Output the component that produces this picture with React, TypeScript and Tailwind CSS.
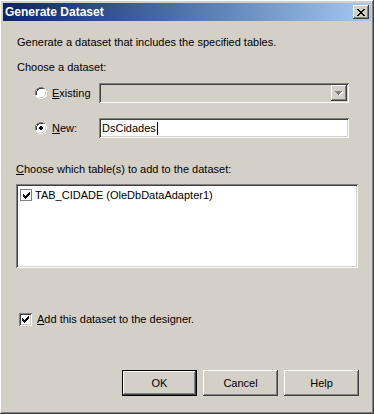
import React from "react";

const sunken =
  "shadow-[inset_1px_1px_0_#808080,inset_-1px_-1px_0_#ffffff,inset_2px_2px_0_#404040,inset_-2px_-2px_0_#d4d0c8]";
const raised =
  "shadow-[inset_-1px_-1px_0_#404040,inset_1px_1px_0_#ffffff,inset_-2px_-2px_0_#808080,inset_2px_2px_0_#d4d0c8]";

function Pixels({ rows, color, w, h }: { rows: string[]; color: string; w: number; h: number }) {
  const rects: React.ReactElement[] = [];
  rows.forEach((r, y) => {
    for (let x = 0; x < r.length; x++) {
      if (r[x] === "x") rects.push(<rect key={`${x}-${y}`} x={x} y={y} width={1} height={1} fill={color} />);
    }
  });
  return (
    <svg width={w} height={h} viewBox={`0 0 ${w} ${h}`} shapeRendering="crispEdges">
      {rects}
    </svg>
  );
}

const CHECK = ["......x", ".....xx", "x...xxx", "xx.xxx.", "xxxxx..", ".xxx...", "..x...."];
const CLOSE = ["xx....xx", ".xx..xx.", "..xxxx..", "...xx...", "..xxxx..", ".xx..xx.", "xx....xx"];

function Radio({ checked }: { checked?: boolean }) {
  return (
    <svg width="12" height="12" viewBox="0 0 12 12" className="shrink-0" shapeRendering="crispEdges">
      <path d="M4 0h4v1h2v1h1v2h1v4h-1v2h-1v1h-2v1h-4v-1h-2v-1h-1v-2h-1v-4h1v-2h1v-1h2z" fill="#ffffff" />
      <path d="M4 0h4v1h2v1h-2v-1h-4v1h-2v1h-1v2h-1v-2h1v-1h1v-1h2zM0 4h1v4h-1z" fill="#808080" />
      <path d="M4 1h4v1h-4v1h-1v1h-1v4h-1v-4h1v-1h1v-1h1z M2 2h1v1h-1z" fill="#404040" />
      <path d="M11 4h1v4h-1v2h-1v1h-2v1h-4v-1h4v-1h2v-1h1z" fill="#ffffff" />
      <path d="M10 4h1v4h-1v1h-1v1h-1v1h-4v-1h4v-1h1v-1h1z" fill="#d4d0c8" />
      <path d="M4 2h4v1h1v1h1v4h-1v1h-1v1h-4v-1h-1v-1h-1v-4h1v-1h1z" fill="#ffffff" />
      {checked && <path d="M5 4h2v1h1v2h-1v1h-2v-1h-1v-2h1z" fill="#000000" />}
    </svg>
  );
}

export default function App() {
  return (
    <div
      className={`w-[374px] h-[414px] bg-[#d4d0c8] p-[3px] flex flex-col text-[11px] leading-[13px] text-black ${raised}`}
      style={{ fontFamily: '"Liberation Sans", Arial, sans-serif' }}
    >
      {/* Title bar */}
      <div className="h-[18px] flex items-center justify-between bg-gradient-to-r from-[#0a246a] to-[#a6caf0] pl-[2px] pr-[2px]">
        <span className="text-white font-bold text-[12px] leading-[14px]">Generate Dataset</span>
        <div className={`w-[16px] h-[14px] bg-[#d4d0c8] flex items-center justify-center ${raised}`}>
          <Pixels rows={CLOSE} color="#000000" w={8} h={7} />
        </div>
      </div>

      <div className="flex flex-col">
        <div className="mt-[15px] ml-[14px] h-[13px]">Generate a dataset that includes the specified tables.</div>
        <div className="mt-[12px] ml-[14px] h-[13px]">Choose a dataset:</div>

        {/* Existing row */}
        <div className="mt-[9px] h-[20px] flex items-center">
          <div className="ml-[32px] w-[12px] flex"><Radio /></div>
          <span className="ml-[5px] w-[47px]">
            <u>E</u>xisting
          </span>
          <div className={`w-[250px] h-[20px] bg-[#d4d0c8] flex justify-end items-start p-[2px] ${sunken}`}>
            <div className={`w-[16px] h-[16px] flex items-center justify-center ${raised}`}>
              <svg width="8" height="5" viewBox="0 0 8 5" shapeRendering="crispEdges">
                <path d="M1 1h7v1h-1v1h-1v1h-1v1h-1v-1h-1v-1h-1v-1h-1z" fill="#ffffff" />
                <path d="M0 0h7v1h-1v1h-1v1h-1v1h-1v-1h-1v-1h-1v-1h-1z" fill="#808080" />
              </svg>
            </div>
          </div>
        </div>

        {/* New row */}
        <div className="mt-[15px] h-[20px] flex items-center">
          <div className="ml-[32px] w-[12px] flex"><Radio checked /></div>
          <span className="ml-[5px] w-[47px]">
            <u>N</u>ew:
          </span>
          <div className={`w-[250px] h-[20px] bg-white flex items-center pl-[3px] ${sunken}`}>
            <span>DsCidades</span>
            <span className="w-px h-[13px] bg-black ml-px" />
          </div>
        </div>

        <div className="mt-[25px] ml-[13px] h-[13px]">
          <u>C</u>hoose which table(s) to add to the dataset:
        </div>

        {/* List */}
        <div className={`mt-[8px] ml-[13px] w-[342px] h-[84px] bg-white p-[2px] ${sunken}`}>
          <div className="flex items-center h-[16px] mt-[1px]">
            <div className="ml-[2px] w-[12px] h-[12px] border border-[#808080] bg-white flex items-center justify-center">
              <Pixels rows={CHECK} color="#000000" w={7} h={7} />
            </div>
            <span className="ml-[3px]">TAB_CIDADE (OleDbDataAdapter1)</span>
          </div>
        </div>

        {/* Add checkbox */}
        <div className="mt-[45px] h-[13px] flex items-center">
          <div className={`ml-[16px] w-[13px] h-[13px] bg-white flex items-center justify-center ${sunken}`}>
            <Pixels rows={CHECK} color="#000000" w={7} h={7} />
          </div>
          <span className="ml-[5px]">
            <u>A</u>dd this dataset to the designer.
          </span>
        </div>

        {/* Buttons */}
        <div className="mt-[44px] flex justify-end gap-[6px] pr-[12px]">
          <button className="w-[75px] h-[26px] border border-black bg-[#d4d0c8] flex items-center justify-center p-0">
            <span className={`w-full h-full flex items-center justify-center ${raised}`}>OK</span>
          </button>
          <button className={`w-[75px] h-[26px] bg-[#d4d0c8] flex items-center justify-center ${raised}`}>Cancel</button>
          <button className={`w-[75px] h-[26px] bg-[#d4d0c8] flex items-center justify-center ${raised}`}>Help</button>
        </div>
      </div>
    </div>
  );
}
